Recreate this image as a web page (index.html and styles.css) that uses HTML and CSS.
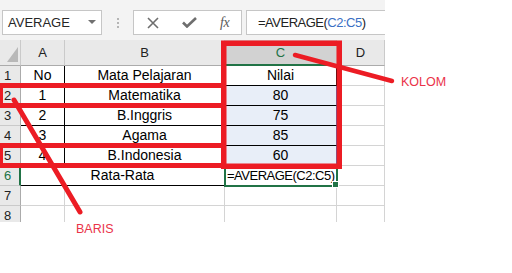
FILE: index.html
```html
<!DOCTYPE html>
<html lang="id">
<head>
    <meta charset="UTF-8">
    <title>Baris dan Kolom - AVERAGE</title>
    <link rel="stylesheet" href="styles.css">
</head>
<body>
<div class="page">
    <div class="excel">
        <div class="toolbar">
            <div class="namebox">
                <span>AVERAGE</span>
                <svg width="8" height="5" viewBox="0 0 8 5"><path d="M0 0h8L4 4z" fill="#707070"/></svg>
            </div>
            <div class="grip"><i></i><i></i><i></i></div>
            <div class="fbuttons">
                <svg width="12" height="12" viewBox="0 0 12 12"><path d="M1 1l10 10M11 1L1 11" stroke="#6e6e6e" stroke-width="1.6"/></svg>
                <svg width="15" height="11" viewBox="0 0 15 11"><path d="M1 5.5l4 4L14 1" fill="none" stroke="#6e6e6e" stroke-width="2.6"/></svg>
                <span class="fx">fx</span>
            </div>
            <div class="finput">=AVERAGE(<span class="ref">C2:C5</span>)</div>
        </div>

        <div class="sheet">
            <div class="hd corner"><svg width="21" height="26" viewBox="0 0 21 26"><path d="M7 22h11V7z" fill="#b8b8b8"/></svg></div>
            <div class="hd">A</div>
            <div class="hd">B</div>
            <div class="hd sel">C</div>
            <div class="hd">D</div>

            <div class="rh">1</div>
            <div class="c t">No</div>
            <div class="c t">Mata Pelajaran</div>
            <div class="c t">Nilai</div>
            <div class="c"></div>

            <div class="rh">2</div>
            <div class="c t">1</div>
            <div class="c t">Matematika</div>
            <div class="c t range">80</div>
            <div class="c"></div>

            <div class="rh">3</div>
            <div class="c t">2</div>
            <div class="c t">B.Inggris</div>
            <div class="c t range">75</div>
            <div class="c"></div>

            <div class="rh">4</div>
            <div class="c t">3</div>
            <div class="c t">Agama</div>
            <div class="c t range">85</div>
            <div class="c"></div>

            <div class="rh">5</div>
            <div class="c t">4</div>
            <div class="c t">B.Indonesia</div>
            <div class="c t range">60</div>
            <div class="c"></div>

            <div class="rh sel">6</div>
            <div class="c t merged">Rata-Rata</div>
            <div class="c t active">=AVERAGE(C2:C5)</div>
            <div class="c"></div>

            <div class="rh">7</div>
            <div class="c"></div>
            <div class="c"></div>
            <div class="c"></div>
            <div class="c"></div>

            <div class="rh">8</div>
            <div class="c"></div>
            <div class="c"></div>
            <div class="c"></div>
            <div class="c"></div>
        </div>
    </div>

    <!-- coretan merah di atas screenshot -->
    <svg class="marks" width="512" height="273" viewBox="0 0 512 273">
        <g fill="none" stroke="#ec1c24" stroke-linecap="round">
            <rect x="0.5" y="85.5" width="223" height="20" stroke-width="5"/>
            <rect x="0.5" y="145.5" width="223" height="20" stroke-width="5"/>
            <rect x="223.75" y="43.25" width="115.5" height="123" stroke-width="5.5"/>
            <line x1="295" y1="55" x2="392" y2="81" stroke-width="4.5"/>
            <line x1="14" y1="100" x2="80" y2="212" stroke-width="5"/>
        </g>
    </svg>
    <span class="label kolom">KOLOM</span>
    <span class="label baris">BARIS</span>
</div>
</body>
</html>
```

FILE: styles.css
```css
* {
    box-sizing: border-box;
}
body {
    margin: 0;
    background: #fff;
    font-family: "Liberation Sans", Arial, sans-serif;
}
.page {
    position: relative;
    width: 512px;
    height: 273px;
    overflow: hidden;
}
.excel {
    width: 385px;
    height: 222px;
    overflow: hidden;
}
.toolbar {
    height: 40px;
    background: #f3f3f3;
    display: flex;
    align-items: flex-start;
    padding: 10px 0 0 2px;
}
.namebox {
    width: 100px;
    height: 25px;
    background: #fff;
    border: 1px solid #c6c6c6;
    display: flex;
    align-items: center;
    justify-content: space-between;
    padding: 0 5px 0 5px;
    font-size: 13px;
    color: #262626;
}
.grip {
    width: 31px;
    height: 25px;
    display: flex;
    flex-direction: column;
    align-items: center;
    justify-content: center;
    gap: 2px;
}
.grip i {
    width: 2px;
    height: 2px;
    background: #b5b5b5;
}
.fbuttons {
    width: 109px;
    height: 25px;
    background: #fff;
    border: 1px solid #c6c6c6;
    display: flex;
    align-items: center;
    padding-left: 13px;
    gap: 23px;
}
.fx {
    font-family: "Liberation Serif", serif;
    font-style: italic;
    font-size: 14px;
    color: #5a5a5a;
    letter-spacing: -0.5px;
}
.finput {
    flex: 1;
    margin-left: 4px;
    height: 25px;
    background: #fff;
    border: 1px solid #c6c6c6;
    border-right: none;
    padding-left: 11px;
    font-size: 13px;
    line-height: 23px;
    letter-spacing: -0.5px;
    color: #222;
    white-space: nowrap;
}
.ref {
    color: #3a6fc4;
}
.sheet {
    display: grid;
    grid-template-columns: 21px 44px 160px 112px 48px;
    grid-template-rows: 26px repeat(8, 20px);
}
.hd {
    background: #e9e9e9;
    border-right: 1px solid #cacaca;
    border-bottom: 1px solid #ababab;
    font-size: 13px;
    color: #222;
    display: flex;
    align-items: center;
    justify-content: center;
}
.hd.sel {
    background: #d2d2d2;
    color: #217346;
    border-bottom: 2px solid #217346;
}
.corner {
    display: block;
}
.corner svg {
    display: block;
}
.rh {
    background: #e9e9e9;
    border-right: 1px solid #ababab;
    border-bottom: 1px solid #cacaca;
    font-size: 13px;
    line-height: 19px;
    color: #222;
    padding-left: 4px;
}
.rh.sel {
    color: #217346;
    border-right: 2px solid #217346;
}
.c {
    border-right: 1px solid #d4d4d4;
    border-bottom: 1px solid #d4d4d4;
    font-size: 14px;
    line-height: 19px;
    text-align: center;
    color: #000;
}
.c.t {
    border-color: #000;
}
.c.range {
    background: #e8eef8;
    border-right-color: #3d73c8;
}
.merged {
    grid-column: span 2;
}
.c.active {
    position: relative;
    text-align: left;
    padding-left: 2px;
    font-size: 13px;
    letter-spacing: -0.5px;
    outline: 2px solid #217346;
    outline-offset: -1px;
}
.c.active::after {
    content: "";
    position: absolute;
    right: -3px;
    bottom: -3px;
    width: 5px;
    height: 5px;
    background: #217346;
    border: 1px solid #fff;
}
.marks {
    position: absolute;
    top: 0;
    left: 0;
    pointer-events: none;
}
.label {
    position: absolute;
    font-size: 12.5px;
    line-height: 14px;
    color: #ea3349;
}
.kolom {
    left: 401px;
    top: 75px;
}
.baris {
    left: 76px;
    top: 222px;
}
```
